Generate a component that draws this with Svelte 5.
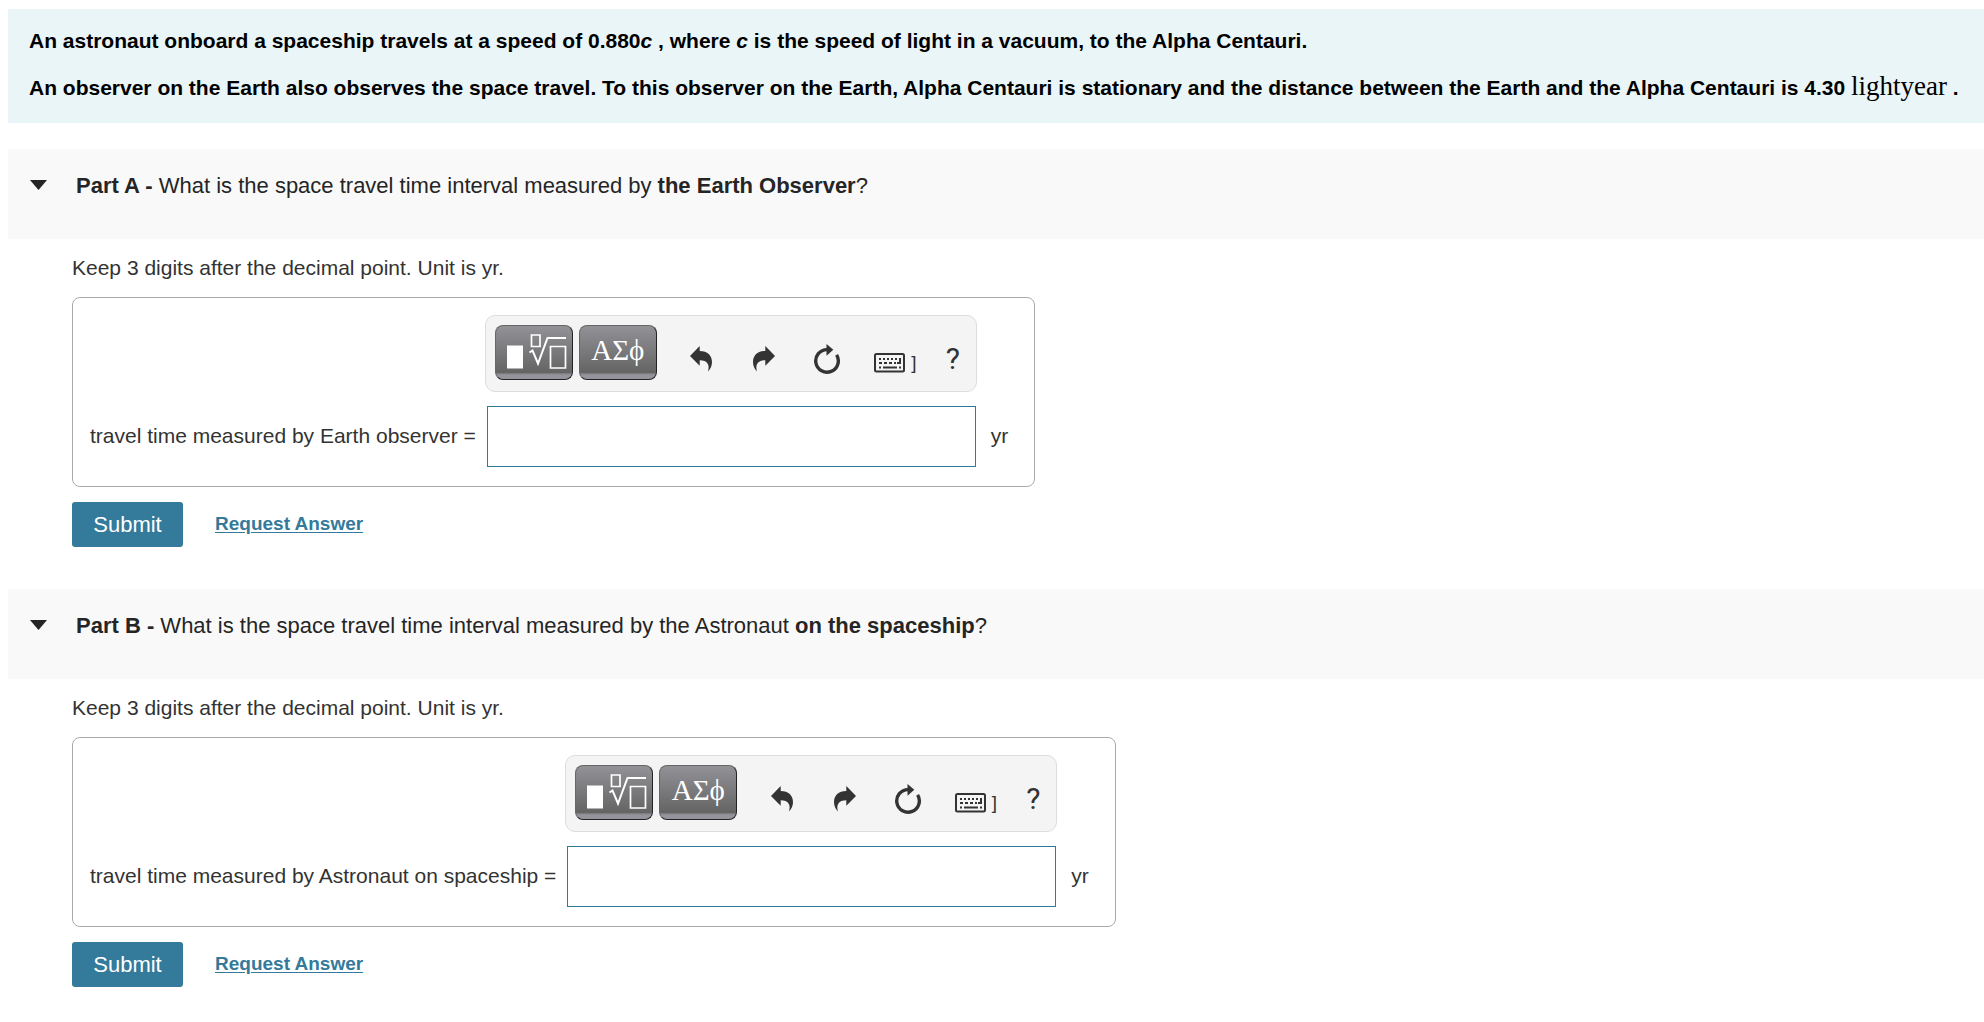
<script lang="ts">
  type Part = {
    id: string;
    name: string;
    question: string;
    emphasis: string;
    label: string;
    answer: string;
    open: boolean;
  };

  let parts: Part[] = $state([
    {
      id: "a",
      name: "Part A -",
      question: "What is the space travel time interval measured by",
      emphasis: "the Earth Observer",
      label: "travel time measured by Earth observer =",
      answer: "",
      open: true,
    },
    {
      id: "b",
      name: "Part B -",
      question: "What is the space travel time interval measured by the Astronaut",
      emphasis: "on the spaceship",
      label: "travel time measured by Astronaut on spaceship =",
      answer: "",
      open: true,
    },
  ]);
</script>

<main>
  <section class="intro">
    <p>
      An astronaut onboard a spaceship travels at a speed of 0.880<i>c</i> , where <i>c</i> is the speed
      of light in a vacuum, to the Alpha Centauri.
    </p>
    <p>
      An observer on the Earth also observes the space travel. To this observer on the Earth, Alpha
      Centauri is stationary and the distance between the Earth and the Alpha Centauri is 4.30
      <span class="unit">lightyear</span> .
    </p>
  </section>

  {#each parts as part (part.id)}
    <section class="part">
      <header>
        <button
          class="toggle"
          class:closed={!part.open}
          aria-label="Toggle part"
          aria-expanded={part.open}
          onclick={() => (part.open = !part.open)}
        >
          <svg width="17" height="10" viewBox="0 0 17 10"><path d="M0 0h17L8.5 10z" /></svg>
        </button>
        <h2><b>{part.name}</b> {part.question} <b>{part.emphasis}</b>?</h2>
      </header>

      {#if part.open}
        <form class="body" onsubmit={(e) => e.preventDefault()}>
          <p class="hint">Keep 3 digits after the decimal point. Unit is yr.</p>

          <div class="answer">
            <div class="toolbar">
              <button type="button" class="palette" aria-label="Templates">
                <svg width="76" height="53" viewBox="1 1 76 53" fill="none" stroke="#fff">
                  <path d="M12 20.500h16v23H12z" fill="#fff" stroke="none" />
                  <path d="M36.500 10H45v11.500h-8.500z" stroke-width="1.700" />
                  <path d="M34.500 27.500l3-2L43 38.500 52.500 13H71" stroke-width="2" />
                  <path d="M55.500 21.500h15V43h-15z" stroke-width="1.700" />
                </svg>
              </button>
              <button type="button" class="palette greek">ΑΣϕ</button>
              <button type="button" class="tool first" aria-label="Undo">
                <svg width="22" height="26" viewBox="0 0 22 26">
                  <path d="M0 10L9.700 0v5C17.500 5 22 9.500 22 16c0 4-1.500 7-4 9.500C20 19 17.500 14.300 9.700 14.300v5.400z" />
                </svg>
              </button>
              <button type="button" class="tool" aria-label="Redo">
                <svg width="22" height="26" viewBox="0 0 22 26">
                  <path d="M22 10L12.300 0v5C4.500 5 0 9.500 0 16c0 4 1.500 7 4 9.500C2 19 4.500 14.300 12.300 14.300v5.400z" />
                </svg>
              </button>
              <button type="button" class="tool" aria-label="Reset">
                <svg width="28" height="30" viewBox="0 0 28 30">
                  <path d="M14 5.600a11.300 11.300 0 1 0 9.600 5.300" fill="none" stroke="#333" stroke-width="3.400" />
                  <path d="M13.500 0l6.800 5.800-6.800 5.900z" />
                </svg>
              </button>
              <button type="button" class="tool keyboard" aria-label="Keyboard shortcuts">
                <svg width="31" height="20" viewBox="0 0 31 20" fill="none" stroke="#333" stroke-width="2">
                  <rect x="1" y="1" width="29" height="17.500" rx="1.500" />
                  <path d="M5 6h19" stroke-dasharray="2 2" />
                  <path d="M5 10h17" stroke-dasharray="3 2" />
                  <path d="M23 10h3V5" />
                  <path d="M5 14.500h2M9 14.500h14M25 14.500h2" />
                </svg>
                <span>]</span>
              </button>
              <button type="button" class="tool help" aria-label="Help">?</button>
            </div>
            <label for="answer-{part.id}">{part.label}</label>
            <input id="answer-{part.id}" type="text" autocomplete="off" bind:value={part.answer} />
            <span class="suffix">yr</span>
          </div>

          <div class="actions">
            <button type="submit" class="submit">Submit</button>
            <a href="#request-{part.id}">Request Answer</a>
          </div>
        </form>
      {/if}
    </section>
  {/each}
</main>

<style>
  :global(body) {
    background: #fff;
  }

  main {
    padding: 9px 0 0 8px;
    font-family: "Liberation Sans", Arial, sans-serif;
    font-size: 21px;
    line-height: 25px;
    color: #333;
  }

  p,
  h2 {
    margin: 0;
  }

  button,
  input {
    font-family: inherit;
    box-sizing: border-box;
  }

  button {
    padding: 0;
    border: 0;
    background: none;
    cursor: pointer;
  }

  .intro {
    padding: 19px 21px 23px;
    margin-bottom: 26px;
    background: #eaf5f8;
    color: #000;
    font-weight: bold;
  }

  .intro p + p {
    margin-top: 22px;
  }

  .unit {
    font-family: "Liberation Serif", "Times New Roman", serif;
    font-size: 27px;
    font-weight: normal;
    line-height: 1px;
  }

  .part {
    margin-bottom: 42px;
  }

  header {
    display: flex;
    align-items: flex-start;
    height: 90px;
    box-sizing: border-box;
    padding: 24px 22px;
    background: #f9f9f9;
    color: #252525;
  }

  .toggle {
    display: flex;
    align-items: center;
    width: 46px;
    height: 24px;
    fill: #252525;
  }

  .toggle.closed svg {
    transform: rotate(-90deg);
  }

  h2 {
    font-size: 22px;
    font-weight: normal;
  }

  .body {
    padding: 16px 64px 0;
  }

  .answer {
    display: grid;
    grid-template-columns: auto 492px auto;
    align-items: center;
    width: fit-content;
    box-sizing: border-box;
    margin-top: 17px;
    padding: 17px 26px 19px 17px;
    border: 1px solid #aaa;
    border-radius: 8px;
  }

  .toolbar {
    grid-column: 2;
    display: flex;
    align-items: flex-start;
    height: 77px;
    box-sizing: border-box;
    padding: 9px 0 9px 9px;
    margin-bottom: 14px;
    border: 1px solid #ddd;
    border-radius: 10px;
    background: #f4f4f4;
  }

  .palette {
    display: flex;
    flex-shrink: 0;
    align-items: center;
    justify-content: center;
    width: 78px;
    height: 55px;
    margin-right: 6px;
    border: 1px solid #666;
    border-right-color: #222;
    border-bottom-color: #222;
    border-radius: 8px;
    background: linear-gradient(#929297, #646464 47px, #777 47px, #94949c 49px);
    color: #fff;
  }

  .greek {
    padding-bottom: 4px;
    font-family: "Liberation Serif", "Times New Roman", serif;
    font-size: 29px;
  }

  .tool {
    display: flex;
    flex-shrink: 0;
    align-items: center;
    justify-content: center;
    width: 63px;
    height: 55px;
    padding-top: 12px;
    fill: #333;
    color: #333;
  }

  .first {
    margin-left: 7px;
  }

  .keyboard {
    gap: 6px;
    width: 73px;
    padding-top: 20px;
    font-size: 19px;
    line-height: 20px;
  }

  .help {
    width: 42px;
    font-family: Roboto, sans-serif;
    font-size: 30px;
  }

  label {
    grid-column: 1;
    padding: 0 9px 2px 0;
  }

  input {
    height: 61px;
    margin: 0 1px 0 2px;
    padding: 0 12px;
    border: 1px solid #317a9b;
    border-radius: 0;
    outline: none;
    background: #fff;
    color: #333;
    font-size: 21px;
  }

  .suffix {
    padding: 0 0 2px 14px;
  }

  .actions {
    display: flex;
    align-items: center;
    gap: 32px;
    margin-top: 15px;
  }

  .submit {
    width: 111px;
    height: 45px;
    border-radius: 3px;
    background: #337a9b;
    color: #fff;
    font-size: 22px;
  }

  a {
    padding-bottom: 2px;
    color: #337a9b;
    font-size: 19px;
    font-weight: bold;
    text-underline-offset: 2px;
  }
</style>
